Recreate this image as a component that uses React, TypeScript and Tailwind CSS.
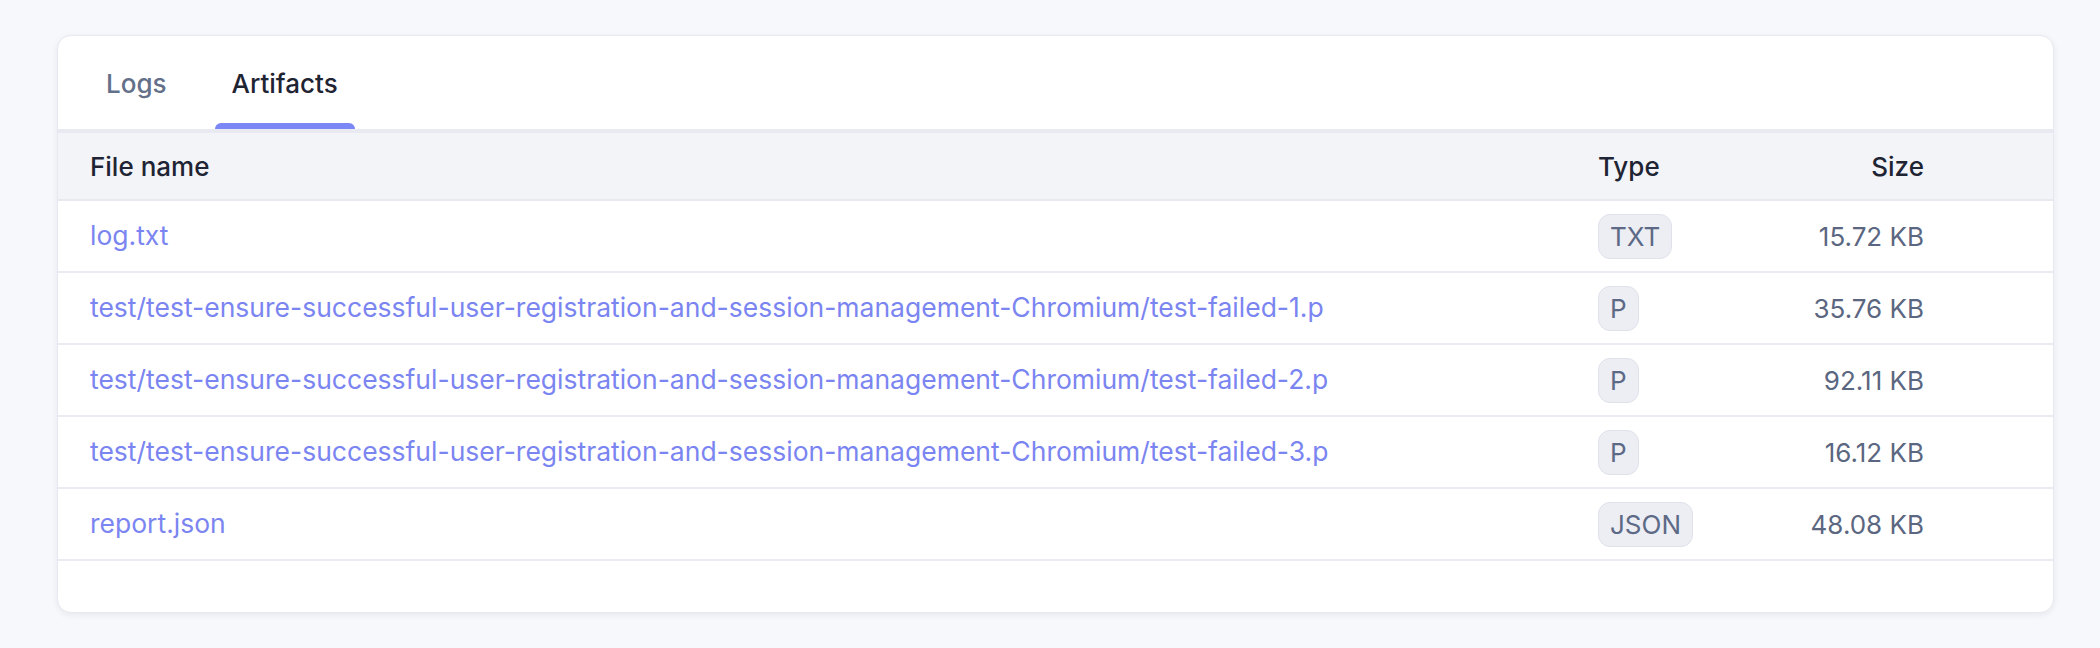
import React from 'react';

interface Artifact {
  name: string;
  type: string;
  size: string;
}

const ARTIFACTS: Artifact[] = [
  { name: 'log.txt', type: 'TXT', size: '15.72 KB' },
  {
    name: 'test/test-ensure-successful-user-registration-and-session-management-Chromium/test-failed-1.p',
    type: 'P',
    size: '35.76 KB',
  },
  {
    name: 'test/test-ensure-successful-user-registration-and-session-management-Chromium/test-failed-2.p',
    type: 'P',
    size: '92.11 KB',
  },
  {
    name: 'test/test-ensure-successful-user-registration-and-session-management-Chromium/test-failed-3.p',
    type: 'P',
    size: '16.12 KB',
  },
  { name: 'report.json', type: 'JSON', size: '48.08 KB' },
];

const App: React.FC = () => {
  return (
    <div
      className="min-h-[648px] bg-[#f7f8fc] pt-[35px] pb-[35px] pl-[57px] pr-[46px]"
      style={{ fontFamily: 'Inter, "Noto Sans", sans-serif' }}
    >
      <div className="h-[578px] rounded-[14px] border border-[#e7e9f0] bg-white shadow-[0_2px_6px_rgba(16,24,40,0.07)] overflow-hidden">
        {/* tabs */}
        <div className="flex h-[97px] items-stretch gap-[31px] border-b-4 border-[#e9eaf1] pl-[31px]">
          <button className="relative flex items-center px-[17px] pt-[2px] text-[26px] font-medium text-[#64708a]">
            Logs
          </button>
          <button className="relative flex items-center px-[17px] pt-[2px] text-[26px] font-medium text-[#1f2433]">
            Artifacts
            <span className="absolute inset-x-0 bottom-0 h-[6px] rounded-t-[7px] bg-[#7b87f5]" />
          </button>
        </div>

        {/* table header */}
        <div className="grid h-[68px] grid-cols-[1fr_200px_126px] items-center border-b-2 border-[#e8e9ef] bg-[#f3f4f8] pl-[32px] pr-[129px] text-[26px] font-medium text-[#1e2433]">
          <div>File name</div>
          <div>Type</div>
          <div className="text-right">Size</div>
        </div>

        {/* rows */}
        {ARTIFACTS.map((a) => (
          <div
            key={a.name}
            className="grid h-[72px] grid-cols-[1fr_200px_126px] items-center border-b-2 border-[#ebecf1] pl-[32px] pr-[129px] text-[26px]"
          >
            <a href="#" className="whitespace-nowrap text-[26.5px] text-[#7b85f1]">
              {a.name}
            </a>
            <div>
              <span className="inline-flex h-[45px] items-center rounded-[12px] border-[1.5px] border-[#dfe2ea] bg-[#eceef4] px-[11px] text-[#5d6985]">
                {a.type}
              </span>
            </div>
            <div className="text-right text-[#5b6680]">{a.size}</div>
          </div>
        ))}
      </div>
    </div>
  );
};

export default App;
